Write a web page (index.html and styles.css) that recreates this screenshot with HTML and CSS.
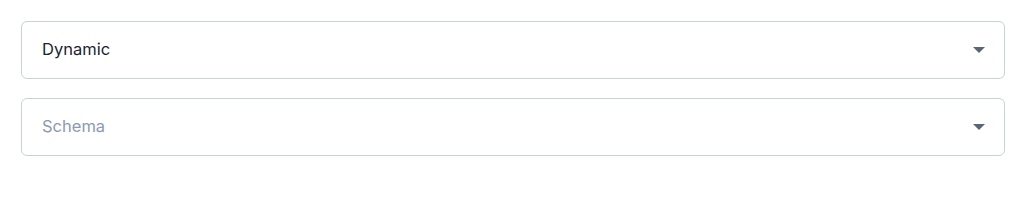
FILE: index.html
```html
<!DOCTYPE html>
<html>
<head>
<meta charset="utf-8">
<link rel="stylesheet" href="styles.css">
</head>
<body>
<div class="form">
  <div class="select">
    <span class="value">Dynamic</span>
    <svg class="caret" width="12" height="6" viewBox="0 0 12 6"><path d="M0 0H12L6 6Z" fill="#5a6577"/></svg>
  </div>
  <div class="select">
    <span class="placeholder">Schema</span>
    <svg class="caret" width="12" height="6" viewBox="0 0 12 6"><path d="M0 0H12L6 6Z" fill="#5a6577"/></svg>
  </div>
</div>
</body>
</html>
```
FILE: styles.css
```css
html, body {
  margin: 0;
  padding: 0;
  background: #ffffff;
}
body {
  font-family: Inter, "Noto Sans", sans-serif;
}
.form {
  display: flex;
  flex-direction: column;
  gap: 19px;
  padding: 21px 19px 0 21px;
}
.select {
  box-sizing: border-box;
  height: 58px;
  border: 1px solid #c9d1dc;
  border-radius: 6px;
  display: flex;
  align-items: center;
  justify-content: space-between;
  padding: 0 19px 2px 20px;
  font-size: 16.5px;
}
.value {
  color: #1a2233;
}
.placeholder {
  color: #8a9ab0;
}
.caret {
  display: block;
  margin-top: 1px;
}
```
